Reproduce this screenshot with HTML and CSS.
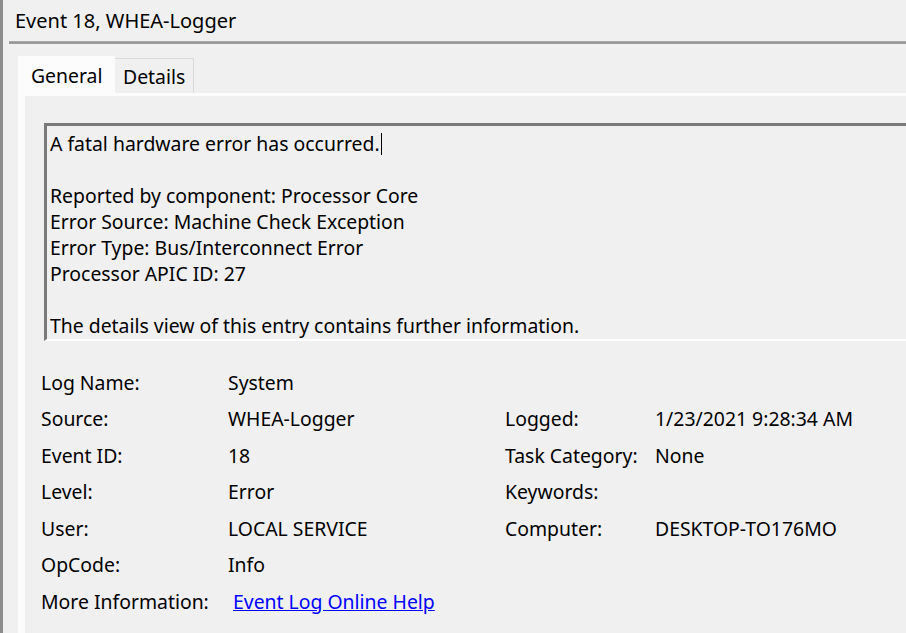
FILE: index.html
```html
<!DOCTYPE html>
<html>
<head>
  <link rel="stylesheet" href="styles.css">
</head>
<body>
  <div class="window">
    <div class="title">Event 18, WHEA-Logger</div>
    <div class="separator"></div>

    <div class="tabs">
      <div class="tab active">General</div>
      <div class="tab">Details</div>
    </div>

    <div class="tab-panel">
      <div class="message">
        <div class="line">A fatal hardware error has occurred.<span class="caret"></span></div>
        <div class="line"></div>
        <div class="line">Reported by component: Processor Core</div>
        <div class="line">Error Source: Machine Check Exception</div>
        <div class="line">Error Type: Bus/Interconnect Error</div>
        <div class="line">Processor APIC ID: 27</div>
        <div class="line"></div>
        <div class="line">The details view of this entry contains further information.</div>
      </div>

      <div class="fields">
        <div class="label">Log Name:</div>
        <div class="value">System</div>
        <div></div>
        <div></div>

        <div class="label">Source:</div>
        <div class="value">WHEA-Logger</div>
        <div class="label">Logged:</div>
        <div class="value">1/23/2021 9:28:34 AM</div>

        <div class="label">Event ID:</div>
        <div class="value">18</div>
        <div class="label">Task Category:</div>
        <div class="value">None</div>

        <div class="label">Level:</div>
        <div class="value">Error</div>
        <div class="label">Keywords:</div>
        <div class="value"></div>

        <div class="label">User:</div>
        <div class="value">LOCAL SERVICE</div>
        <div class="label">Computer:</div>
        <div class="value">DESKTOP-TO176MO</div>

        <div class="label">OpCode:</div>
        <div class="value">Info</div>
        <div></div>
        <div></div>

        <div class="label">More Information:</div>
        <div class="value"><a class="help-link" href="#">Event Log Online Help</a></div>
        <div></div>
        <div></div>
      </div>
    </div>
  </div>
</body>
</html>
```

FILE: styles.css
```css
* {
  box-sizing: border-box;
  margin: 0;
  padding: 0;
}

html, body {
  height: 100%;
  overflow: hidden;
}

body {
  font-family: "Noto Sans", "Open Sans", sans-serif;
  font-size: 19.4px;
  color: #000;
  background: #f0f0f0;
}

.window {
  display: flex;
  flex-direction: column;
  height: 100%;
  border-left: 3px solid #8c8c8c;
}

.title {
  height: 41px;
  line-height: 42px;
  padding-left: 12px;
  font-size: 20px;
}

.separator {
  height: 3px;
  margin-left: 6px;
  background: linear-gradient(#b4b4b4, #8e8e8e 60%, #a8a8a8);
}

.tabs {
  display: flex;
  align-items: flex-end;
  margin-top: 11px;
  margin-left: 15px;
  height: 38px;
}

.tab {
  width: 79px;
  height: 35px;
  line-height: 36px;
  padding-left: 8px;
  background: #f0f0f0;
  border: 1px solid #d9d9d9;
  border-bottom: none;
  border-left: none;
}

.tab.active {
  height: 39px;
  line-height: 40px;
  width: 97px;
  padding-left: 13px;
  background: #fcfcfc;
  border: none;
  position: relative;
  top: 2px;
}

.tab-panel {
  flex: 1;
  margin-left: 15px;
  border-top: 3px solid #fcfcfc;
  border-left: 7px solid #fcfcfc;
  padding: 27px 0 0 19px;
}

.message {
  width: 900px;
  height: 218px;
  padding: 5px 0 0 3px;
  border-top: 3px solid;
  border-left: 3px solid;
  border-color: #7a7a7a;
  border-bottom: 2px solid #fdfdfd;
  line-height: 26px;
  overflow: hidden;
  white-space: nowrap;
}

.line {
  height: 26px;
}

.caret {
  display: inline-block;
  width: 0;
  height: 22px;
  margin-left: 1px;
  vertical-align: -4px;
  border-left: 1px solid #000;
}

.fields {
  display: grid;
  grid-template-columns: 187px 277px 150px auto;
  grid-auto-rows: 36.5px;
  align-items: center;
  margin-top: 23px;
  margin-left: -3px;
}

.help-link {
  margin-left: 5px;
  color: #0000ff;
  text-decoration: underline;
}
```
